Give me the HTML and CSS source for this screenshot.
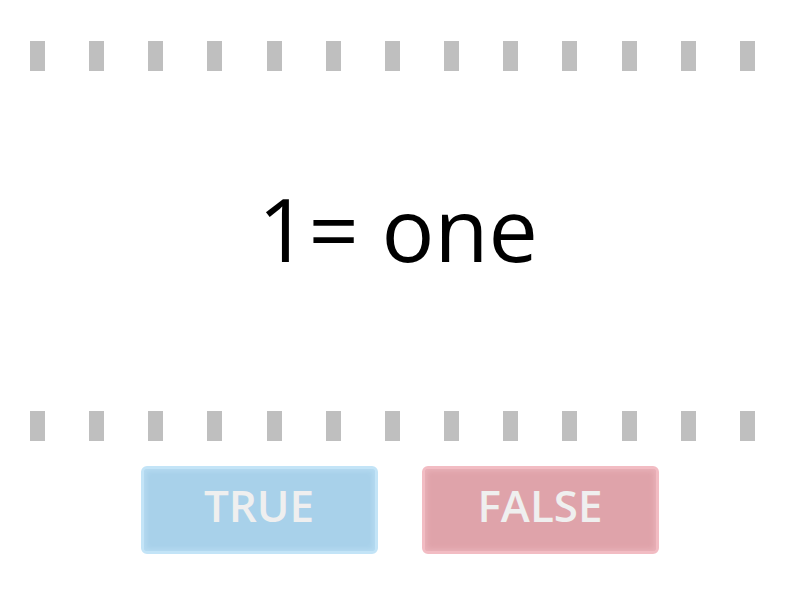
FILE: index.html
```html
<!DOCTYPE html>
<html lang="en">
<head>
<meta charset="utf-8">
<title>True or false</title>
<link rel="stylesheet" href="styles.css">
</head>
<body>
<main class="quiz">
  <div class="edge edge-top">
    <span class="dash"></span><span class="dash"></span><span class="dash"></span><span class="dash"></span><span class="dash"></span><span class="dash"></span><span class="dash"></span><span class="dash"></span><span class="dash"></span><span class="dash"></span><span class="dash"></span><span class="dash"></span><span class="dash"></span>
  </div>
  <div class="card">
    <p class="statement">1= one</p>
  </div>
  <div class="edge edge-bottom">
    <span class="dash"></span><span class="dash"></span><span class="dash"></span><span class="dash"></span><span class="dash"></span><span class="dash"></span><span class="dash"></span><span class="dash"></span><span class="dash"></span><span class="dash"></span><span class="dash"></span><span class="dash"></span><span class="dash"></span>
  </div>
  <div class="answers">
    <button class="answer answer-true" type="button">TRUE</button>
    <button class="answer answer-false" type="button">FALSE</button>
  </div>
</main>
</body>
</html>
```

FILE: styles.css
```css
html, body {
  margin: 0;
  padding: 0;
  background: #ffffff;
}

body {
  font-family: "Open Sans", "Noto Sans", sans-serif;
  width: 800px;
  height: 600px;
  overflow: hidden;
}

.quiz {
  display: flex;
  flex-direction: column;
  padding-top: 41px;
}

.edge {
  display: flex;
  justify-content: space-between;
  width: 725px;
  margin-left: 30px;
}

.dash {
  display: block;
  width: 15px;
  height: 30px;
  background: #bfbfbf;
}

.card {
  height: 340px;
  display: flex;
  align-items: center;
  justify-content: center;
}

.statement {
  margin: 0;
  font-size: 88px;
  line-height: 1;
  color: #000000;
  padding-bottom: 26px;
  padding-right: 4px;
}

.answers {
  display: flex;
  justify-content: center;
  gap: 44px;
  margin-top: 25px;
  padding-right: 1px;
}

.answer {
  width: 237px;
  height: 88px;
  box-sizing: border-box;
  border-radius: 6px;
  font-family: "Open Sans", "Noto Sans", sans-serif;
  font-weight: 600;
  font-size: 44px;
  line-height: 1;
  color: #efefef;
  padding: 0 0 10px 0;
  cursor: pointer;
}

.answer-true {
  background: #a8d1ea;
  border: 3px solid #c3e4f7;
  box-shadow: inset 0 0 5px 2px #b6dbf1;
}

.answer-false {
  background: #dfa3aa;
  border: 3px solid #f2bcc3;
  box-shadow: inset 0 0 5px 2px #e9b1b8;
}
```
